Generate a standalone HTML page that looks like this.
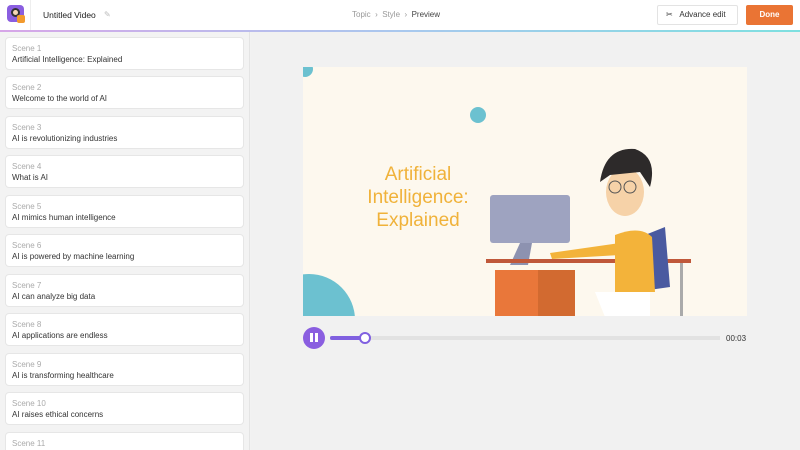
<!DOCTYPE html>
<html><head><style>
*{margin:0;padding:0;box-sizing:border-box}
html,body{width:800px;height:450px;overflow:hidden}
body{background:#f2f2f2;font-family:"Liberation Sans",sans-serif;position:relative}
.top{position:absolute;left:0;top:0;width:800px;height:30px;background:#fff}
.line{position:absolute;left:0;top:30px;width:800px;height:2px;background:linear-gradient(90deg,#d7a6e8,#a9c8ee,#7ee0e0)}
.side{position:absolute;left:0;top:32px;width:250px;height:418px;background:#f3f3f3;border-right:1px solid #e4e4e4;overflow:hidden}
.card{position:absolute;left:5px;width:239px;height:33px;background:#fff;border:1px solid #e6e6e6;border-radius:4px;padding:5px 6px}
.card .s{font-size:8px;color:#aaa;line-height:11px}
.card .t{font-size:8px;color:#333;line-height:12px}
.main{position:absolute;left:251px;top:32px;width:549px;height:418px;background:#f1f1f1}
</style></head><body>
<div class="top">
 <div style="position:absolute;left:7px;top:5px;width:17px;height:17px;background:#8a5ee0;border-radius:4px"></div>
 <div style="position:absolute;left:11px;top:8px;width:9px;height:9px;background:#f6d7b5;border-radius:50%;border:2px solid #333"></div>
 <div style="position:absolute;left:17px;top:15px;width:8px;height:8px;background:#f29a2e;border-radius:2px"></div>
 <div style="position:absolute;left:30px;top:0;width:1px;height:30px;background:#eee"></div>
 <div style="position:absolute;left:43px;top:10px;font-size:8.5px;color:#222">Untitled Video</div>
 <div style="position:absolute;left:104px;top:10px;font-size:8px;color:#bbb">✎</div>
 <div style="position:absolute;left:352px;top:10px;font-size:8px;color:#999">Topic &nbsp;›&nbsp; Style &nbsp;›&nbsp; <span style="color:#444">Preview</span></div>
 <div style="position:absolute;left:657px;top:5px;width:81px;height:20px;border:1px solid #e3e3e3;border-radius:2px;font-size:8px;color:#333;line-height:18px;padding-left:8px">✂ &nbsp;&nbsp;Advance edit</div>
 <div style="position:absolute;left:746px;top:5px;width:47px;height:20px;background:#ea7434;border-radius:2px;font-size:8px;color:#fff;font-weight:bold;text-align:center;line-height:20px">Done</div>
</div>
<div class="line"></div>
<div class="side">
 <div class="card" style="top:5px"><div class="s">Scene 1</div><div class="t">Artificial Intelligence: Explained</div></div>
 <div class="card" style="top:44px"><div class="s">Scene 2</div><div class="t">Welcome to the world of AI</div></div>
 <div class="card" style="top:84px"><div class="s">Scene 3</div><div class="t">AI is revolutionizing industries</div></div>
 <div class="card" style="top:123px"><div class="s">Scene 4</div><div class="t">What is AI</div></div>
 <div class="card" style="top:163px"><div class="s">Scene 5</div><div class="t">AI mimics human intelligence</div></div>
 <div class="card" style="top:202px"><div class="s">Scene 6</div><div class="t">AI is powered by machine learning</div></div>
 <div class="card" style="top:242px"><div class="s">Scene 7</div><div class="t">AI can analyze big data</div></div>
 <div class="card" style="top:281px"><div class="s">Scene 8</div><div class="t">AI applications are endless</div></div>
 <div class="card" style="top:321px"><div class="s">Scene 9</div><div class="t">AI is transforming healthcare</div></div>
 <div class="card" style="top:360px"><div class="s">Scene 10</div><div class="t">AI raises ethical concerns</div></div>
 <div class="card" style="top:400px"><div class="s">Scene 11</div></div>
</div>
<div class="main"></div>
<div style="position:absolute;left:303px;top:67px;width:444px;height:249px;background:#fdf8ee;overflow:hidden">
 <div style="position:absolute;left:-6px;top:-6px;width:16px;height:16px;border-radius:50%;background:#6cc1d0"></div>
 <div style="position:absolute;left:167px;top:40px;width:16px;height:16px;border-radius:50%;background:#6cc1d0"></div>
 <div style="position:absolute;left:-40px;top:207px;width:92px;height:92px;border-radius:50%;background:#6cc1d0"></div>
 <div style="position:absolute;left:45px;top:96px;width:140px;text-align:center;font-size:19px;line-height:23px;color:#f0b23a">Artificial Intelligence: Explained</div>
 <svg style="position:absolute;left:177px;top:80px" width="220" height="170">
  <rect x="10" y="48" width="80" height="48" rx="3" fill="#9ea3c0"/>
  <polygon points="40,96 52,96 48,118 30,118" fill="#8d92b0"/>
  <rect x="6" y="112" width="205" height="4" fill="#c0583a"/>
  <rect x="15" y="123" width="80" height="46" fill="#e9773a"/>
  <rect x="58" y="123" width="37" height="46" fill="#d26a30"/>
  <rect x="152" y="116" width="3" height="54" fill="#aaa"/>
  <rect x="200" y="116" width="3" height="54" fill="#aaa"/>
  <path d="M160 90 L185 80 L190 140 L155 145 Z" fill="#4a5aa0"/>
  <path d="M135 88 Q160 78 172 90 L175 145 L135 145 Z" fill="#f3b33a"/>
  <path d="M70 106 L140 96 L140 108 L72 112 Z" fill="#f3b33a"/>
  <path d="M115 145 L170 145 L170 170 L125 170 Z" fill="#fff"/>
  <ellipse cx="145" cy="45" rx="19" ry="24" fill="#f6d2a8"/>
  <path d="M120 35 Q125 0 155 2 Q178 10 170 40 L160 25 L130 28 Z" fill="#2d2a2a"/>
  <circle cx="135" cy="40" r="6" fill="none" stroke="#555"/>
  <circle cx="150" cy="40" r="6" fill="none" stroke="#555"/>
 </svg>
</div>
<div style="position:absolute;left:303px;top:327px;width:22px;height:22px;border-radius:50%;background:#8a5ee0"></div>
<div style="position:absolute;left:310px;top:333px;width:3px;height:9px;background:#fff"></div>
<div style="position:absolute;left:315px;top:333px;width:3px;height:9px;background:#fff"></div>
<div style="position:absolute;left:330px;top:336px;width:390px;height:4px;background:#e2e2e2"></div>
<div style="position:absolute;left:330px;top:336px;width:36px;height:4px;background:#8060e0;border-radius:2px"></div>
<div style="position:absolute;left:359px;top:332px;width:12px;height:12px;border-radius:50%;background:#fff;border:2px solid #8060e0"></div>
<div style="position:absolute;left:726px;top:334px;font-size:8px;color:#333">00:03</div>
</body></html>
